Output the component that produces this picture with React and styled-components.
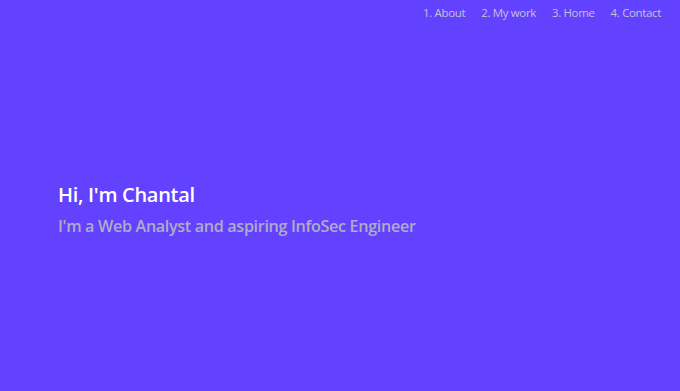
import React from "react";
import styled, { createGlobalStyle } from "styled-components";

const GlobalStyle = createGlobalStyle`
  html, body {
    margin: 0;
    padding: 0;
    background: #6242ff;
  }
  * { box-sizing: border-box; }
`;

const Page = styled.div`
  width: 100%;
  min-height: 100vh;
  background: #6242ff;
  font-family: "Open Sans", "Noto Sans", sans-serif;
  display: flex;
  flex-direction: column;
`;

const Nav = styled.nav`
  display: flex;
  justify-content: flex-end;
  gap: 16px;
  padding: 5px 19px 0 0;
`;

const NavLink = styled.a`
  color: #c4c0d8;
  font-size: 11.5px;
  text-decoration: none;
  letter-spacing: -0.35px;
`;

const Hero = styled.section`
  flex: 1;
  display: flex;
  flex-direction: column;
  justify-content: center;
  padding: 6px 0 0 58px;
`;

const Title = styled.h1`
  margin: 0;
  color: #ffffff;
  font-size: 20px;
  font-weight: 600;
  letter-spacing: -0.3px;
`;

const Subtitle = styled.h2`
  margin: 7px 0 0;
  color: #b0acc8;
  font-size: 16.2px;
  font-weight: 600;
  letter-spacing: -0.35px;
`;

export default function App() {
  return (
    <Page>
      <GlobalStyle />
      <Nav>
        <NavLink href="#about">1. About</NavLink>
        <NavLink href="#work">2. My work</NavLink>
        <NavLink href="#home">3. Home</NavLink>
        <NavLink href="#contact">4. Contact</NavLink>
      </Nav>
      <Hero>
        <Title>Hi, I'm Chantal</Title>
        <Subtitle>I'm a Web Analyst and aspiring InfoSec Engineer</Subtitle>
      </Hero>
    </Page>
  );
}
